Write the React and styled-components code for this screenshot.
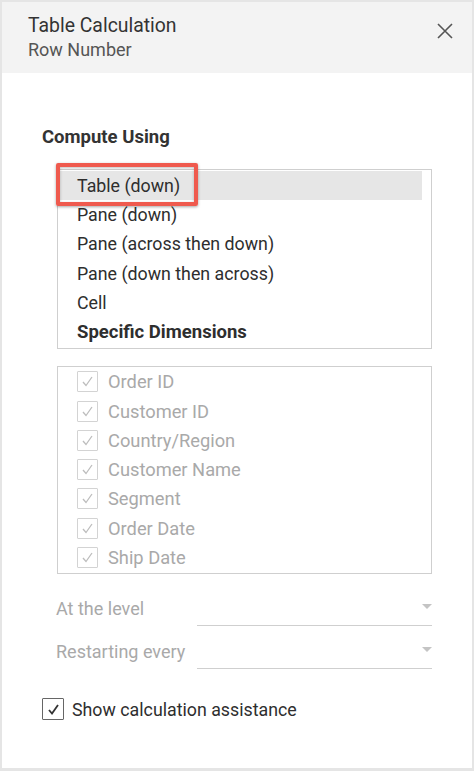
import React from "react";
import styled, { createGlobalStyle } from "styled-components";

const Global = createGlobalStyle`
  html, body { margin: 0; padding: 0; background: #fff; }
  body { font-family: Roboto, "Liberation Sans", Arial, sans-serif; }
  * { box-sizing: border-box; }
`;

const Panel = styled.div`
  width: 474px;
  height: 771px;
  border: 2px solid #e5e5e5;
  border-bottom-width: 3px;
  background: #fff;
  display: flex;
  flex-direction: column;
  color: #333;
`;

const Header = styled.header`
  background: #f3f3f3;
  height: 71px;
  padding: 12px 18px 0 26px;
  display: flex;
  justify-content: space-between;
  align-items: flex-start;
`;

const Titles = styled.div`
  display: flex;
  flex-direction: column;
`;

const Title = styled.div`
  font-size: 19.4px;
  line-height: 24px;
  color: #333;
`;

const Subtitle = styled.div`
  font-size: 18px;
  line-height: 23px;
  color: #555;
`;

const CloseButton = styled.button`
  border: none;
  background: transparent;
  padding: 0;
  margin-top: 8px;
  width: 18px;
  height: 18px;
  cursor: pointer;
  svg { display: block; }
`;

const Body = styled.div`
  padding: 0 40px;
  display: flex;
  flex-direction: column;
`;

const SectionTitle = styled.div`
  margin-top: 52px;
  font-size: 18.5px;
  line-height: 24px;
  font-weight: 700;
  color: #333;
`;

const ListBox = styled.div`
  position: relative;
  margin: 20px 0 0 15px;
  border: 1px solid #cfcfcf;
  padding: 1px 9px 2px 0;
  display: flex;
  flex-direction: column;
`;

const ListItem = styled.div`
  height: 29.2px;
  display: flex;
  align-items: center;
  padding-left: 19px;
  font-size: ${(p) => (p.$bold ? "18.5px" : "17.8px")};
  color: #2e2e2e;
  font-weight: ${(p) => (p.$bold ? 700 : 400)};
  background: ${(p) => (p.$selected ? "#e6e6e6" : "transparent")};
`;

const Highlight = styled.div`
  position: absolute;
  left: -2px;
  top: -7px;
  width: 142px;
  height: 43px;
  border: 4px solid #ef5a4e;
  border-radius: 2px;
  box-shadow: 0 1px 3px rgba(0, 0, 0, 0.35), inset 0 1px 3px rgba(0, 0, 0, 0.25);
  pointer-events: none;
`;

const DimBox = styled.div`
  margin: 17px 0 0 15px;
  border: 1px solid #cfcfcf;
  padding: 0 0 1px;
  display: flex;
  flex-direction: column;
`;

const DimRow = styled.label`
  height: 29.3px;
  display: flex;
  align-items: center;
  gap: 10px;
  padding-left: 19px;
  font-size: 18.3px;
  color: #a9a9a9;
`;

const Box = styled.span`
  width: ${(p) => (p.$size || 21)}px;
  height: ${(p) => (p.$size || 21)}px;
  border: ${(p) => (p.$dark ? "1.5px solid #666" : "1px solid #d3d3d3")};
  border-radius: 1px;
  background: #fff;
  display: flex;
  align-items: center;
  justify-content: center;
  flex: none;
`;

const LevelGrid = styled.div`
  margin: 17px 0 0 14px;
  display: grid;
  grid-template-columns: 141px 1fr;
  row-gap: 8px;
`;

const LevelLabel = styled.div`
  font-size: 18px;
  color: #a9a9a9;
  height: 35px;
  display: flex;
  align-items: center;
`;

const LevelSelect = styled.div`
  height: 35px;
  border-bottom: 1px solid #cfcfcf;
  display: flex;
  align-items: center;
  justify-content: flex-end;
  padding-bottom: 2px;
`;

const Assist = styled.label`
  margin-top: 29px;
  display: flex;
  align-items: center;
  gap: 8px;
  font-size: 17.8px;
  color: #2e2e2e;
`;

const Check = ({ color = "#bdbdbd", w = 1.3 }) => (
  <svg width="13" height="13" viewBox="0 0 13 13">
    <path d="M2 7 L5 10.5 L11 2" fill="none" stroke={color} strokeWidth={w} />
  </svg>
);

const Caret = () => (
  <svg width="10" height="6" viewBox="0 0 10 6">
    <path d="M0 0 L10 0 L5 5 Z" fill="#c4c4c4" />
  </svg>
);

const options = [
  "Table (down)",
  "Pane (down)",
  "Pane (across then down)",
  "Pane (down then across)",
  "Cell",
];

const dims = [
  "Order ID",
  "Customer ID",
  "Country/Region",
  "Customer Name",
  "Segment",
  "Order Date",
  "Ship Date",
];

export default function App() {
  return (
    <>
      <Global />
      <Panel>
        <Header>
          <Titles>
            <Title>Table Calculation</Title>
            <Subtitle>Row Number</Subtitle>
          </Titles>
          <CloseButton aria-label="Close">
            <svg width="18" height="18" viewBox="0 0 18 18">
              <path d="M2 2 L16 16 M16 2 L2 16" stroke="#555" strokeWidth="1.6" />
            </svg>
          </CloseButton>
        </Header>
        <Body>
          <SectionTitle>Compute Using</SectionTitle>
          <ListBox>
            {options.map((o, i) => (
              <ListItem key={o} $selected={i === 0}>
                {o}
              </ListItem>
            ))}
            <ListItem $bold>Specific Dimensions</ListItem>
            <Highlight />
          </ListBox>
          <DimBox>
            {dims.map((d) => (
              <DimRow key={d}>
                <Box>
                  <Check />
                </Box>
                {d}
              </DimRow>
            ))}
          </DimBox>
          <LevelGrid>
            <LevelLabel>At the level</LevelLabel>
            <LevelSelect>
              <Caret />
            </LevelSelect>
            <LevelLabel>Restarting every</LevelLabel>
            <LevelSelect>
              <Caret />
            </LevelSelect>
          </LevelGrid>
          <Assist>
            <Box $dark $size={22}>
              <Check color="#333" w={1.8} />
            </Box>
            Show calculation assistance
          </Assist>
        </Body>
      </Panel>
    </>
  );
}
